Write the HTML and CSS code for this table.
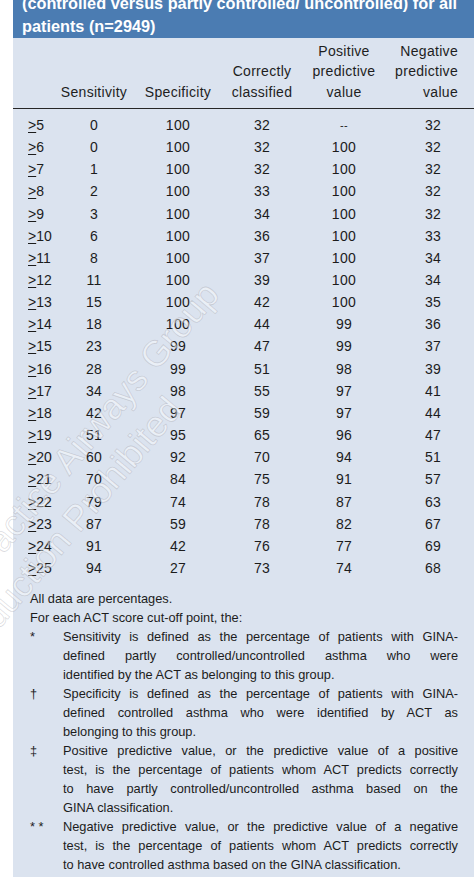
FILE: index.html
```html
<!DOCTYPE html>
<html lang="en">
<head>
<meta charset="utf-8">
<title>ACT cut-off points</title>
<link rel="stylesheet" href="styles.css">
</head>
<body>
<div class="panel">
  <div class="title">(controlled versus partly controlled/ uncontrolled) for all<br>patients (n=2949)</div>
  <table class="data">
    <colgroup>
      <col class="c1"><col class="c2"><col class="c3"><col class="c4"><col class="c5"><col class="c6">
    </colgroup>
    <thead>
      <tr>
        <th class="cut"></th>
        <th>Sensitivity</th>
        <th>Specificity</th>
        <th>Correctly<br>classified</th>
        <th>Positive<br>predictive<br>value</th>
        <th class="npv">Negative<br>predictive<br>value</th>
      </tr>
    </thead>
    <tbody>
      <tr><td class="cut"><span class="ge">&gt;</span>5</td><td>0</td><td>100</td><td>32</td><td class="dash">--</td><td>32</td></tr>
      <tr><td class="cut"><span class="ge">&gt;</span>6</td><td>0</td><td>100</td><td>32</td><td>100</td><td>32</td></tr>
      <tr><td class="cut"><span class="ge">&gt;</span>7</td><td>1</td><td>100</td><td>32</td><td>100</td><td>32</td></tr>
      <tr><td class="cut"><span class="ge">&gt;</span>8</td><td>2</td><td>100</td><td>33</td><td>100</td><td>32</td></tr>
      <tr><td class="cut"><span class="ge">&gt;</span>9</td><td>3</td><td>100</td><td>34</td><td>100</td><td>32</td></tr>
      <tr><td class="cut"><span class="ge">&gt;</span>10</td><td>6</td><td>100</td><td>36</td><td>100</td><td>33</td></tr>
      <tr><td class="cut"><span class="ge">&gt;</span>11</td><td>8</td><td>100</td><td>37</td><td>100</td><td>34</td></tr>
      <tr><td class="cut"><span class="ge">&gt;</span>12</td><td>11</td><td>100</td><td>39</td><td>100</td><td>34</td></tr>
      <tr><td class="cut"><span class="ge">&gt;</span>13</td><td>15</td><td>100</td><td>42</td><td>100</td><td>35</td></tr>
      <tr><td class="cut"><span class="ge">&gt;</span>14</td><td>18</td><td>100</td><td>44</td><td>99</td><td>36</td></tr>
      <tr><td class="cut"><span class="ge">&gt;</span>15</td><td>23</td><td>99</td><td>47</td><td>99</td><td>37</td></tr>
      <tr><td class="cut"><span class="ge">&gt;</span>16</td><td>28</td><td>99</td><td>51</td><td>98</td><td>39</td></tr>
      <tr><td class="cut"><span class="ge">&gt;</span>17</td><td>34</td><td>98</td><td>55</td><td>97</td><td>41</td></tr>
      <tr><td class="cut"><span class="ge">&gt;</span>18</td><td>42</td><td>97</td><td>59</td><td>97</td><td>44</td></tr>
      <tr><td class="cut"><span class="ge">&gt;</span>19</td><td>51</td><td>95</td><td>65</td><td>96</td><td>47</td></tr>
      <tr><td class="cut"><span class="ge">&gt;</span>20</td><td>60</td><td>92</td><td>70</td><td>94</td><td>51</td></tr>
      <tr><td class="cut"><span class="ge">&gt;</span>21</td><td>70</td><td>84</td><td>75</td><td>91</td><td>57</td></tr>
      <tr><td class="cut"><span class="ge">&gt;</span>22</td><td>79</td><td>74</td><td>78</td><td>87</td><td>63</td></tr>
      <tr><td class="cut"><span class="ge">&gt;</span>23</td><td>87</td><td>59</td><td>78</td><td>82</td><td>67</td></tr>
      <tr><td class="cut"><span class="ge">&gt;</span>24</td><td>91</td><td>42</td><td>76</td><td>77</td><td>69</td></tr>
      <tr><td class="cut"><span class="ge">&gt;</span>25</td><td>94</td><td>27</td><td>73</td><td>74</td><td>68</td></tr>
    </tbody>
  </table>
  <div class="notes">
    <p class="plain">All data are percentages.</p>
    <p class="plain">For each ACT score cut-off point, the:</p>
    <div class="note">
      <span class="sym">*</span>
      <div class="txt">
        <span class="ln">Sensitivity is defined as the percentage of patients with GINA-</span>
        <span class="ln">defined partly controlled/uncontrolled asthma who were</span>
        <span class="ln end">identified by the ACT as belonging to this group.</span>
      </div>
    </div>
    <div class="note">
      <span class="sym">†</span>
      <div class="txt">
        <span class="ln">Specificity is defined as the percentage of patients with GINA-</span>
        <span class="ln">defined controlled asthma who were identified by ACT as</span>
        <span class="ln end">belonging to this group.</span>
      </div>
    </div>
    <div class="note">
      <span class="sym">‡</span>
      <div class="txt">
        <span class="ln">Positive predictive value, or the predictive value of a positive</span>
        <span class="ln">test, is the percentage of patients whom ACT predicts correctly</span>
        <span class="ln">to have partly controlled/uncontrolled asthma based on the</span>
        <span class="ln end">GINA classification.</span>
      </div>
    </div>
    <div class="note">
      <span class="sym">* *</span>
      <div class="txt">
        <span class="ln">Negative predictive value, or the predictive value of a negative</span>
        <span class="ln">test, is the percentage of patients whom ACT predicts correctly</span>
        <span class="ln end">to have controlled asthma based on the GINA classification.</span>
      </div>
    </div>
  </div>
</div>
<div class="watermark" aria-hidden="true">
  <span class="wm wm1">© General Practice Airways Group</span>
  <span class="wm wm2">Reproduction Prohibited</span>
</div>
</body>
</html>
```

FILE: styles.css
```css
html, body {
  margin: 0;
  padding: 0;
  background: #ffffff;
  overflow: hidden;
}

body {
  font-family: "Liberation Sans", Arial, sans-serif;
  color: #1c1c1c;
  position: relative;
  height: 877px;
}

.panel {
  margin-left: 13px;
  width: 461px;
  background: #dbe3ef;
  padding-bottom: 12px;
}

.title {
  margin-top: -8px;
  background: #4b7cb2;
  color: #ffffff;
  font-weight: bold;
  font-size: 16.3px;
  line-height: 23px;
  padding-left: 9px;
  white-space: nowrap;
}

.data {
  width: 461px;
  border-collapse: collapse;
  table-layout: fixed;
  font-size: 14px;
  letter-spacing: 0.3px;
}

.c1 { width: 47px; }
.c2 { width: 68px; }
.c3 { width: 100px; }
.c4 { width: 68px; }
.c5 { width: 96px; }
.c6 { width: 82px; }

.data th {
  font-weight: normal;
  text-align: center;
  vertical-align: bottom;
  line-height: 20.5px;
  padding: 2.5px 0 5.5px 0;
  border-bottom: 1.6px solid #262626;
  color: #1e1e1e;
  white-space: nowrap;
}

.data th.npv {
  text-align: right;
  padding-right: 16px;
}

.data td {
  text-align: center;
  height: 22.15px;
  line-height: 22.15px;
  padding: 0;
}

.data tbody tr:first-child td {
  padding-top: 5.4px;
}

.data td.cut {
  text-align: left;
  padding-left: 15px;
  letter-spacing: 0;
}

.ge {
  text-decoration: underline;
  text-underline-offset: 2px;
}

.dash {
  font-size: 11px;
}

.notes {
  margin-top: 10px;
  padding: 0 16px 0 17px;
  font-size: 12.8px;
  line-height: 19px;
}

.notes .plain {
  margin: 0;
}

.note {
  display: flex;
}

.sym {
  width: 33px;
  flex: none;
}

.txt {
  flex: 1;
}

.ln {
  display: block;
  text-align: justify;
  text-align-last: justify;
  white-space: nowrap;
}

.ln.end {
  text-align-last: left;
}

.watermark {
  position: absolute;
  left: 0;
  top: 0;
  width: 474px;
  height: 877px;
  overflow: hidden;
  pointer-events: none;
}

.wm {
  position: absolute;
  font-family: "Liberation Sans", Arial, sans-serif;
  font-size: 36px;
  line-height: 36px;
  white-space: nowrap;
  color: rgba(255, 255, 255, 0.45);
  -webkit-text-stroke: 0.8px rgba(130, 130, 140, 0.28);
  transform-origin: 0 50%;
  transform: rotate(-50deg);
}

.wm1 {
  left: -141px;
  top: 690px;
}

.wm2 {
  left: -74px;
  top: 680px;
}
```
